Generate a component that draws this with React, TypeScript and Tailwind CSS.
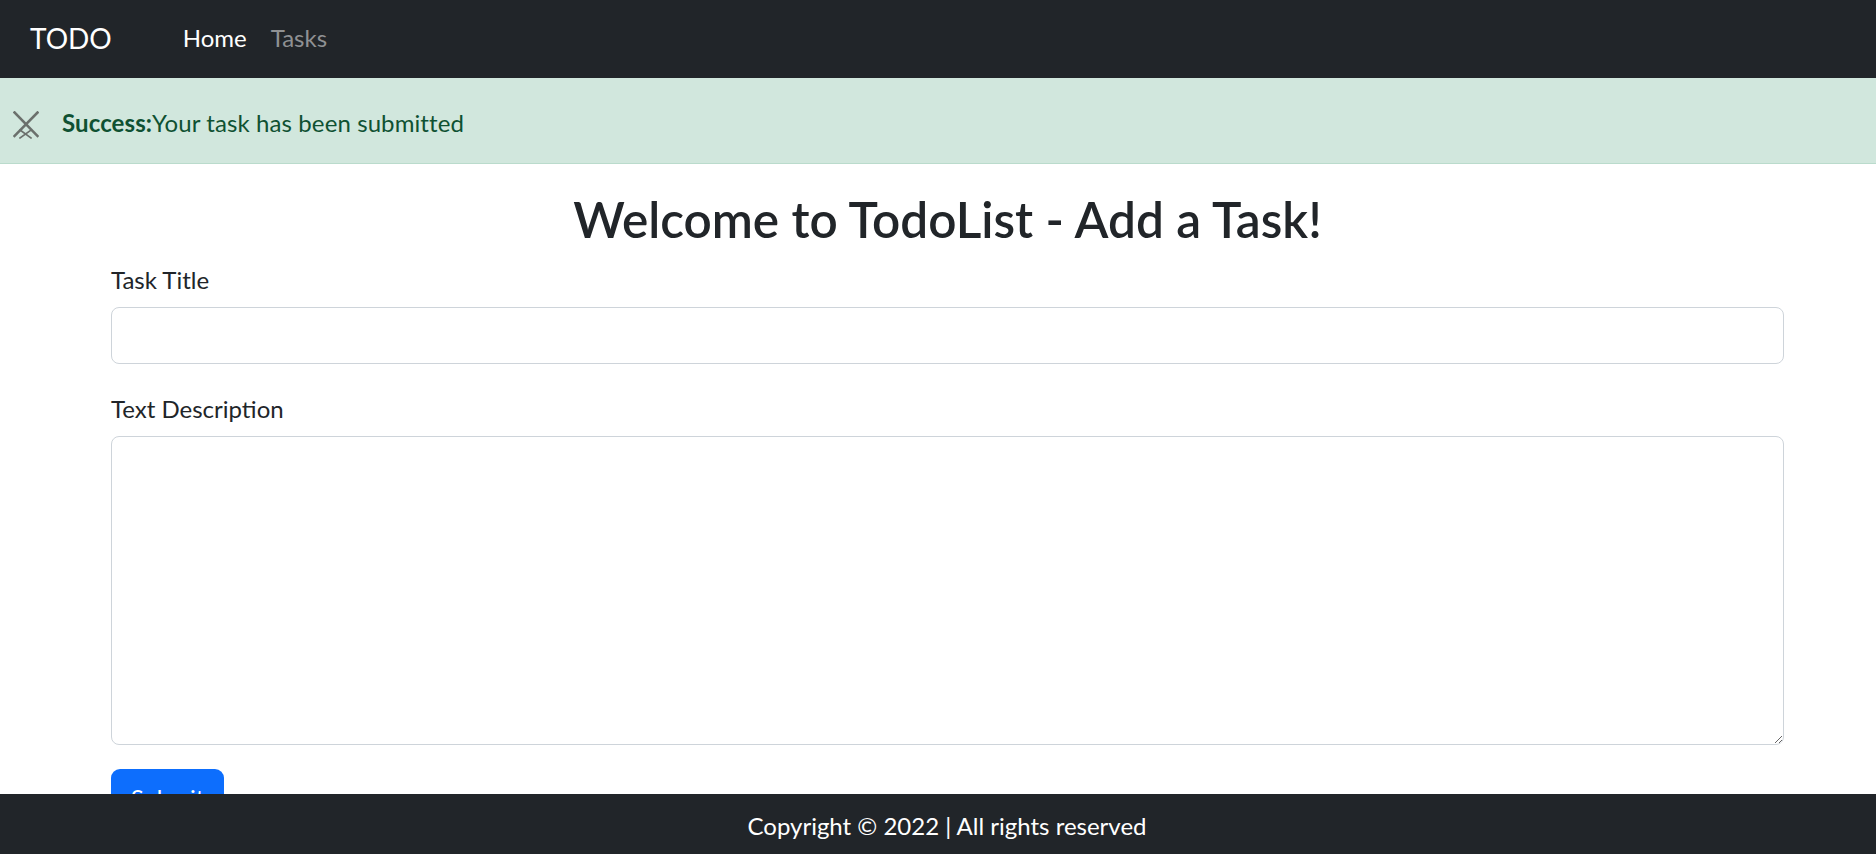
import React from "react"

const font = { fontFamily: '"Lato", "Open Sans", sans-serif' }

function CloseIcon() {
  return (
    <svg width="26" height="28" viewBox="0 0 26 28" className="shrink-0">
      <g stroke="#6b706c" strokeLinecap="square" fill="none">
        <path d="M1.5 1.5 L24.5 25" strokeWidth="2.6" />
        <path d="M24.5 1.5 L1.5 25" strokeWidth="2.6" />
        <path d="M7 19 L18 27" strokeWidth="1.6" />
        <path d="M18 19 L7 27" strokeWidth="1.6" />
      </g>
    </svg>
  )
}

export default function App() {
  return (
    <div className="min-h-[854px] bg-white text-[#212529] text-[24px] leading-[1.5]" style={font}>
      {/* Navbar */}
      <nav className="h-[78px] bg-[#212529] flex items-center pl-[30px] pb-[3px]">
        <a className="text-[28px] text-white leading-none">TODO</a>
        <ul className="flex items-center ml-[71px] gap-[24px]">
          <li>
            <a className="text-white">Home</a>
          </li>
          <li>
            <a className="text-[#8f9193]">Tasks</a>
          </li>
        </ul>
      </nav>

      {/* Alert */}
      <div className="h-[86px] bg-[#d1e7dd] border-b border-[#badbcc] flex items-center text-[#0f5132]">
        <div className="pl-[13px] pt-[8px]">
          <CloseIcon />
        </div>
        <p className="ml-[23px] pt-[5px] tracking-[0.1px]">
          <strong className="font-bold">Success:</strong>Your task has been submitted
        </p>
      </div>

      {/* Form */}
      <div className="ml-[111px] w-[1673px] pt-[26px]">
        <h2 className="text-[49.5px] font-semibold leading-[1.2] text-center mb-[10px]">
          Welcome to TodoList - Add a Task!
        </h2>
        <form>
          <div className="mb-[24px]">
            <label className="block pt-[3px] mb-[9px]">Task Title</label>
            <input
              type="text"
              className="block w-full h-[57px] px-[18px] border border-[#ced4da] rounded-[8px] bg-white outline-none"
            />
          </div>
          <div className="mb-[24px]">
            <label className="block pt-[3px] mb-[9px]">Text Description</label>
            <textarea className="block w-full h-[309px] px-[18px] py-[9px] border border-[#ced4da] rounded-[8px] bg-white outline-none" />
          </div>
          <button
            type="button"
            className="h-[57px] w-[113px] bg-[#0d6efd] text-white rounded-[9px]"
          >
            Submit
          </button>
        </form>
      </div>

      {/* Footer */}
      <footer className="fixed bottom-0 inset-x-0 h-[60px] bg-[#212529] text-white flex items-center justify-center pl-[18px] pt-[4px]">
        <p>Copyright © 2022 | All rights reserved</p>
      </footer>
    </div>
  )
}
